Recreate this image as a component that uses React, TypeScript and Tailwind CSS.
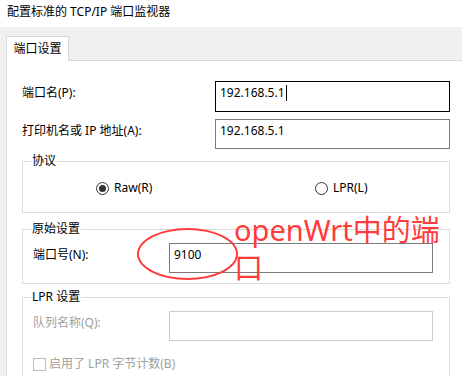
const Radio = ({ label, checked }: { label: string; checked?: boolean }) => {
  return (
    <div className="flex items-center gap-[5px]">
      <span className="flex w-[13px] h-[13px] rounded-full border border-[#333] items-center justify-center bg-white">
        {checked && <span className="w-[7px] h-[7px] rounded-full bg-[#333]"></span>}
      </span>
      <span className="leading-[16px]">{label}</span>
    </div>
  );
};

const Group = ({ title, children, className }: { title: string; children: React.ReactNode; className?: string }) => {
  return (
    <fieldset className={"w-[428px] border border-[#dcdcdc] " + (className ?? "")}>
      <legend className="ml-[8px] px-[1px] leading-[16px] text-black">{title}</legend>
      {children}
    </fieldset>
  );
};

const App = () => {
  return (
    <div className="relative w-[462px] h-[376px] overflow-hidden bg-[#f0f0f0] text-[12px] text-black font-['Noto_Sans','Noto_Sans_CJK_SC',sans-serif] flex flex-col">
      {/* title bar */}
      <div className="h-[27px] bg-white px-[7px] pt-[4px] leading-[16px] shrink-0">配置标准的 TCP/IP 端口监视器</div>

      {/* tabs */}
      <div className="pt-[9px] pl-[6px] shrink-0">
        <div className="relative z-10 -mb-px w-[63px] h-[25px] bg-white border-t border-l border-r border-[#d9d9d9] flex items-center justify-center leading-[16px]">
          端口设置
        </div>
      </div>

      <div className="flex-1 ml-[6px] bg-white border-t border-l border-[#d9d9d9] pt-[20px] pl-[15px]">
        <div className="flex">
          <div className="w-[193px] pt-[4px] leading-[16px]">端口名(P):</div>
          <div className="w-[235px] h-[31px] border border-black pl-[4px] pt-[3px] flex items-start leading-[16px]">
            <span>192.168.5.1</span>
            <span className="w-px h-[16px] bg-black ml-px"></span>
          </div>
        </div>
        <div className="flex mt-[7px]">
          <div className="w-[193px] pt-[4px] leading-[16px]">打印机名或 IP 地址(A):</div>
          <div className="w-[235px] h-[30px] border border-[#7a7a7a] pl-[4px] pt-[3px] leading-[16px]">192.168.5.1</div>
        </div>

        <Group title="协议" className="mt-[4px]">
          <div className="grid grid-cols-2 h-[20px] mt-[9px] mb-[14px] items-center">
            <div className="pl-[73px]">
              <Radio label="Raw(R)" checked />
            </div>
            <div className="pl-[79px]">
              <Radio label="LPR(L)" />
            </div>
          </div>
        </Group>

        <Group title="原始设置" className="mt-[8px]">
          <div className="flex mt-[6px] mb-[10px] pl-[10px]">
            <div className="w-[136px] pt-[4px] leading-[16px]">端口号(N):</div>
            <div className="w-[264px] h-[30px] border border-[#7a7a7a] pl-[4px] pt-[3px] leading-[16px]">9100</div>
          </div>
        </Group>

        <Group title="LPR 设置" className="mt-[5px]">
          <div className="pl-[10px] pb-[20px] text-[#a0a0a0]">
            <div className="flex mt-[6px]">
              <div className="w-[136px] pt-[4px] leading-[16px]">队列名称(Q):</div>
              <div className="w-[264px] h-[30px] border border-[#cccccc]"></div>
            </div>
            <div className="flex items-center gap-[3px] mt-[15px]">
              <span className="w-[13px] h-[13px] border border-[#bcbcbc] bg-white"></span>
              <span className="leading-[16px]">启用了 LPR 字节计数(B)</span>
            </div>
          </div>
        </Group>
      </div>

      {/* red annotation drawn over the dialog */}
      <div className="absolute left-[137px] top-[228px] w-[101px] h-[52px] rounded-[50%] border-2 border-[#ff3b3b]"></div>
      <div className="absolute left-[234px] top-[211px] w-[218px] text-[29px] leading-[38px] text-[#ff3b3b]">
        openWrt中的端口
      </div>
    </div>
  );
};

export default App;
